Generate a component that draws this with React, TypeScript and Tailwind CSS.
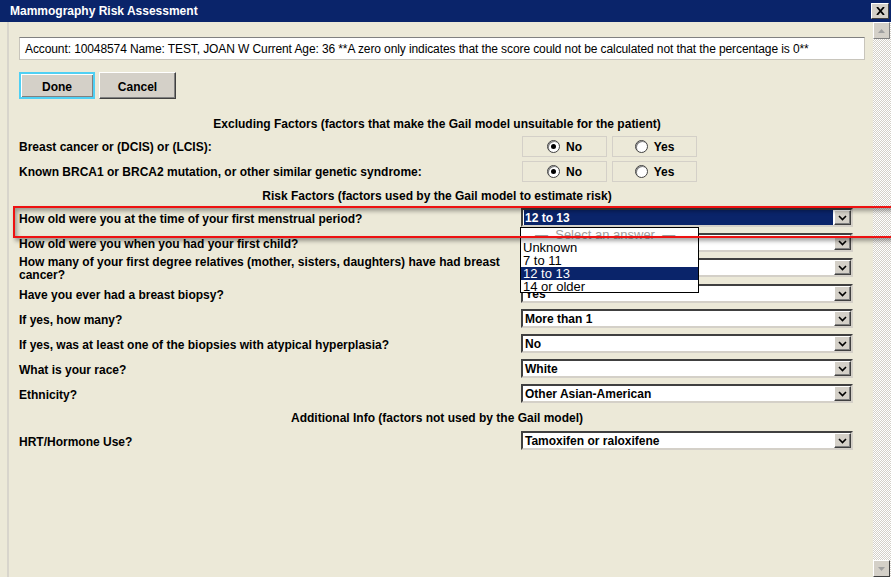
import React from "react";

const font = { fontFamily: '"Liberation Sans", Arial, sans-serif' };

function Chevron() {
  return (
    <svg width="9" height="6" viewBox="0 0 9 6">
      <path d="M1 1 L4.5 4.5 L8 1" fill="none" stroke="#000" strokeWidth="1.6" />
    </svg>
  );
}

function Select({ value, active }: { value?: string; active?: boolean }) {
  return (
    <div className="relative flex h-[19px] w-[332px] border-t-2 border-l-2 border-t-[#404040] border-l-[#404040] border-b-2 border-r-2 border-b-[#d4d0c8] border-r-[#d4d0c8] bg-white">
      <div className="flex-1 flex items-center px-[1px]">
        <div
          className={
            active
              ? "h-full w-full flex items-center bg-[#0a246a] text-white text-[12px] font-bold pl-[1px] pt-[1px] leading-none"
              : "h-full w-full flex items-center text-black text-[12px] font-bold pl-[1px] pt-[1px] leading-none"
          }
        >
          {value}
        </div>
      </div>
      <div className="w-[17px] h-[15px] flex items-center justify-center bg-[#d4d0c8] border border-[#404040] border-t-white border-l-white shadow-[inset_-1px_-1px_0_#808080]">
        <Chevron />
      </div>
    </div>
  );
}

function Radio({ checked, label }: { checked?: boolean; label: string }) {
  return (
    <div className="flex h-[21px] w-[85px] items-center justify-center gap-[6px] border border-[#d4d0c8]">
      <span className="relative flex h-[13px] w-[13px] items-center justify-center rounded-full border border-[#404040] bg-white shadow-[inset_1px_1px_0_#808080]">
        {checked && <span className="h-[5px] w-[5px] rounded-full bg-black" />}
      </span>
      <span className="text-[12px] font-bold text-black pt-[1px]">{label}</span>
    </div>
  );
}

function Heading({ children, h }: { children: React.ReactNode; h: string }) {
  return (
    <div className={`${h} flex items-center justify-center pr-[10px] text-[12px] font-bold text-black`}>
      {children}
    </div>
  );
}

function RadioRow({ label }: { label: string }) {
  return (
    <div className="flex h-[25px] items-start">
      <div className="w-[503px] h-[21px] flex items-center text-[12px] font-bold">{label}</div>
      <div className="flex gap-[5px]">
        <Radio checked label="No" />
        <Radio label="Yes" />
      </div>
    </div>
  );
}

function SelectRow({
  label,
  value,
  h = "h-[25px]",
  children,
  active,
  wrap,
}: {
  label: string;
  value?: string;
  h?: string;
  children?: React.ReactNode;
  active?: boolean;
  wrap?: boolean;
}) {
  return (
    <div className={`flex ${h} items-start`}>
      <div
        className={
          wrap
            ? "w-[502px] pr-[12px] text-[12px] font-bold leading-[13px]"
            : "w-[502px] pr-[12px] mt-[4px] h-[19px] flex items-center text-[12px] font-bold leading-[13px]"
        }
      >
        {label}
      </div>
      <div className="relative mt-[2px]">
        <Select value={value} active={active} />
        {children}
      </div>
    </div>
  );
}

export default function App() {
  return (
    <div style={font} className="relative w-[891px] h-[577px] overflow-hidden bg-[#ece9d8] flex flex-col text-black">
      {/* title bar */}
      <div className="h-[22px] bg-[#0a246a] flex items-center justify-between pl-[10px] pr-[2px] shrink-0">
        <span className="text-white text-[12px] font-bold">Mammography Risk Assessment</span>
        <div className="w-[18px] h-[16px] bg-[#d4d0c8] border border-white border-r-[#404040] border-b-[#404040] flex items-center justify-center">
          <svg width="9" height="8" viewBox="0 0 9 8">
            <path d="M1 0 L8 8 M8 0 L1 8" stroke="#000" strokeWidth="1.8" />
          </svg>
        </div>
      </div>

      <div className="flex flex-1 min-h-0">
        {/* main */}
        <div className="flex-1 ml-[7px] border-l-2 border-l-[#d8d5cc] pl-[10px] pr-[8px] pt-[15px]">
          <div className="h-[23px] bg-white border border-[#c8c5bc] border-t-[#808080] flex items-center pl-[5px] pt-[1px] text-[12px] tracking-[-0.1px]">
            Account: 10048574 Name: TEST, JOAN W Current Age: 36 **A zero only indicates that the score could not be calculated not that the percentage is 0**
          </div>

          <div className="flex gap-[4px] mt-[12px]">
            <button className="w-[76px] h-[27px] pt-[2px] bg-[#d4d0c8] border-2 border-[#4fd0f4] text-[12px] font-bold shadow-[inset_1px_1px_0_#fff,inset_-1px_-1px_0_#808080]">
              Done
            </button>
            <button className="w-[77px] h-[27px] pt-[2px] bg-[#d4d0c8] border border-white border-r-[#404040] border-b-[#404040] text-[12px] font-bold shadow-[inset_-1px_-1px_0_#808080]">
              Cancel
            </button>
          </div>

          <Heading h="h-[37px] pt-[12px]">
            Excluding Factors (factors that make the Gail model unsuitable for the patient)
          </Heading>
          <RadioRow label="Breast cancer or (DCIS) or (LCIS):" />
          <RadioRow label="Known BRCA1 or BRCA2 mutation, or other similar genetic syndrome:" />
          <Heading h="h-[20px]">Risk Factors (factors used by the Gail model to estimate risk)</Heading>

          <SelectRow label="How old were you at the time of your first menstrual period?" value="12 to 13" active>
            <div className="absolute left-[-1px] top-[19px] z-10 w-[179px] h-[66px] bg-white border border-black text-[13px] leading-[13px]">
              <div className="h-[13px] text-[#a0a0a0] pl-[14px]">— &nbsp;Select an answer&nbsp; —</div>
              <div className="h-[13px] pl-[2px]">Unknown</div>
              <div className="h-[13px] pl-[2px]">7 to 11</div>
              <div className="h-[13px] pl-[2px] bg-[#0a246a] text-white">12 to 13</div>
              <div className="h-[13px] pl-[2px]">14 or older</div>
            </div>
          </SelectRow>
          <SelectRow label="How old were you when you had your first child?" />
          <SelectRow
            h="h-[26px]"
            wrap
            label="How many of your first degree relatives (mother, sisters, daughters) have had breast cancer?"
          />
          <SelectRow label="Have you ever had a breast biopsy?" value="Yes" />
          <SelectRow label="If yes, how many?" value="More than 1" />
          <SelectRow label="If yes, was at least one of the biopsies with atypical hyperplasia?" value="No" />
          <SelectRow label="What is your race?" value="White" />
          <SelectRow label="Ethnicity?" value="Other Asian-American" />
          <Heading h="h-[22px]">Additional Info (factors not used by the Gail model)</Heading>
          <SelectRow label="HRT/Hormone Use?" value="Tamoxifen or raloxifene" />
        </div>

        {/* scrollbar */}
        <div className="w-[18px] flex flex-col justify-between bg-[repeating-conic-gradient(#ffffff_0_25%,#d4d0c8_0_50%)] bg-[length:2px_2px]">
          <div className="h-[17px] w-[17px] bg-[#d4d0c8] border border-white border-r-[#808080] border-b-[#808080] flex items-center justify-center">
            <svg width="7" height="4" viewBox="0 0 7 4"><path d="M0 4 L3.5 0 L7 4 Z" fill="#a0a0a0" /></svg>
          </div>
          <div className="h-[17px] w-[17px] bg-[#d4d0c8] border border-white border-r-[#404040] border-b-[#404040] flex items-center justify-center">
            <svg width="7" height="4" viewBox="0 0 7 4"><path d="M0 0 L3.5 4 L7 0 Z" fill="#a0a0a0" /></svg>
          </div>
        </div>
      </div>

      {/* red highlight annotation */}
      <div className="absolute left-[13px] top-[206px] w-[900px] h-[32px] border-2 border-[#ee1111] z-20 pointer-events-none shadow-[2px_3px_4px_rgba(0,0,0,0.35),inset_2px_3px_4px_rgba(0,0,0,0.35)]" />
    </div>
  );
}
